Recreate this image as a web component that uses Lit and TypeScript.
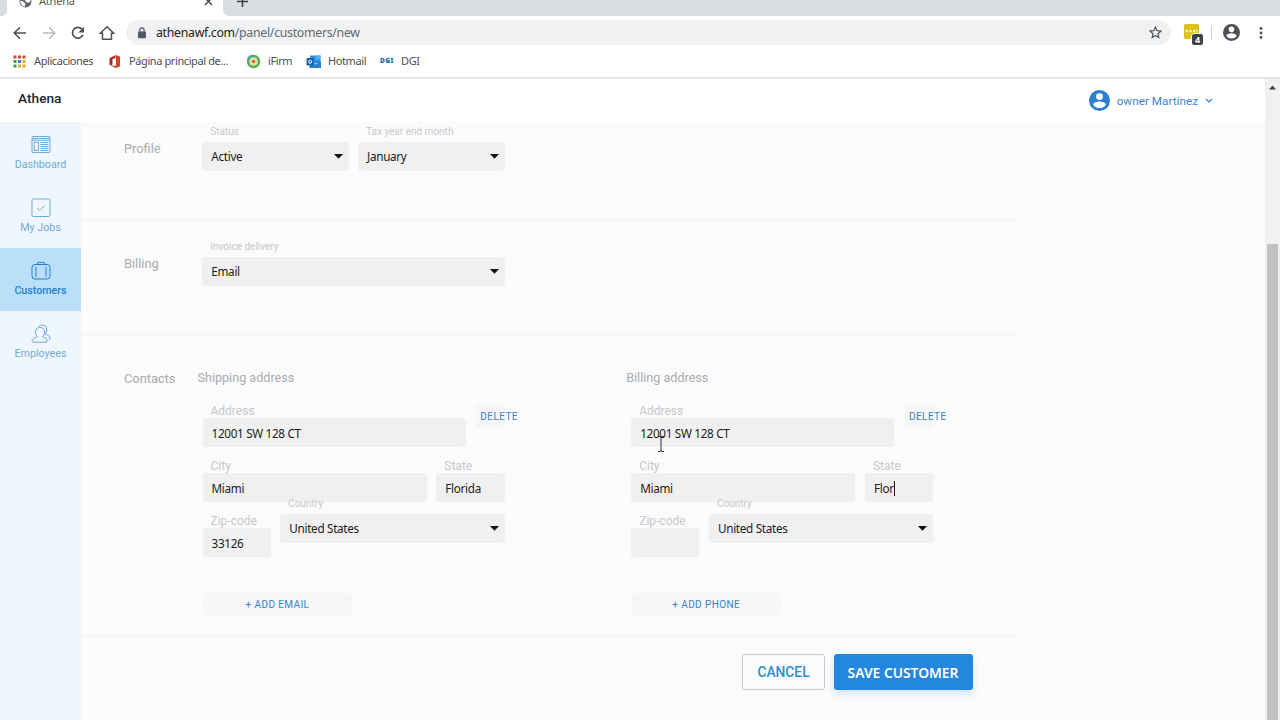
import { LitElement, html, css, svg } from "lit";
import { customElement, property } from "lit/decorators.js";

@customElement("form-field")
class FormField extends LitElement {
  @property() label = "";
  @property() value = "";
  @property({ type: Boolean }) select = false;
  @property({ type: Boolean }) caret = false;

  static styles = css`
    :host { display: block; min-width: 0; }
    .label { height: 13px; padding-left: 8px; font: 400 12px/13.800px Roboto, sans-serif; color: #c6c8cb; white-space: nowrap; }
    .small { font-size: 10px; line-height: 13px; margin-bottom: 4px; }
    .box { height: 29px; box-sizing: border-box; padding: 0 6px 0 9px; background: #f0f0f0; border-radius: 3px; display: flex; align-items: center; justify-content: space-between; font: 11.700px/29px "Noto Sans", sans-serif; letter-spacing: -.3px; color: #1b1b1b; }
    .value { display: flex; align-items: center; white-space: nowrap; }
    .plain .value { padding-top: 2px; }
    .caret { width: 1px; height: 15px; background: #222; }
    .arrow { width: 9px; height: 5px; }
  `;

  render() {
    return html`
      <div class="label ${this.select ? "small" : ""}">${this.label}</div>
      <div class="box ${this.select ? "" : "plain"}">
        <span class="value">${this.value}${this.caret ? html`<i class="caret"></i>` : ""}</span>
        ${this.select ? html`<svg class="arrow" viewBox="0 0 9 5"><path d="M0 0h9L4.5 4.8z" fill="#111"/></svg>` : ""}
      </div>`;
  }
}

const navIcons = {
  dashboard: svg`<rect x="1" y="1.500" width="18" height="16" rx="1"/><path d="M1 5.200h18M1 3.400h18"/><rect x="3.200" y="7.200" width="4.300" height="8.300"/><path d="M9.500 7.500h8M9.500 9.500h8M9.500 11.500h8M9.500 13.500h8M9.500 15.500h8"/>`,
  jobs: svg`<rect x="1" y="1" width="18" height="17.500" rx="1.300"/><path d="M6.200 10l2.600 2.500 5-5.200"/>`,
  customers: svg`<rect x="1" y="3.500" width="18" height="14.500" rx="3"/><path d="M6 3.300l.8-1.900h6.400l.8 1.900M5 5.700v10.400M15 5.700v10.400"/>`,
  employees: svg`<path d="M6.600 12.800C5.200 11.500 4.500 9.900 4.500 8 4.500 5.200 6.300 3.400 9 3.400s4.500 1.800 4.500 4.600c0 1.900-.7 3.500-2.100 4.800 3.100.7 4.700 1.700 4.700 4.100 0 .8-.4 1.300-1.100 1.300H2.100c-.7 0-1.100-.5-1.100-1.300 0-2.400 2.500-3.400 5.600-4.100z"/><path d="M7.900 2.300C8.800 1.400 9.900 1 11.200 1c2.700 0 4.500 1.900 4.500 4.700 0 1.800-.6 3.300-1.900 4.500 3.300.8 5.300 2 5.300 4.300 0 .9-.5 1.400-1.400 1.400"/>`,
};

@customElement("app-root")
class AppRoot extends LitElement {
  static styles = css`
    :host { display: block; width: 1280px; height: 720px; overflow: hidden; position: relative; font-family: Roboto, sans-serif; background: #fff; }
    svg { display: block; flex: none; }
    .tabs { height: 16px; background: #fff; display: flex; overflow: hidden; }
    .tab-prev { width: 7px; background: #dadde2; border-radius: 0 0 5px 0; }
    .tab { box-sizing: border-box; width: 216px; height: 16px; background: #fff; display: flex; align-items: flex-start; padding-left: 12px; }
    .tab-name { font: 11px/16px "Noto Sans", sans-serif; letter-spacing: -.2px; color: #555; margin: -7px 0 0 7px; width: 128px; }
    .tab svg { margin-top: -5px; }
    .tab .close { margin: -3px 0 0 37px; }
    .tab-rest { flex: 1; background: #dadde2; border-bottom-left-radius: 6px; padding-left: 13px; }
    .tab-rest svg { margin-top: -5px; }
    .toolbar { height: 33px; display: flex; align-items: center; padding-left: 12px; }
    .nav-buttons { display: flex; gap: 13px; width: 114px; }
    .omnibox { width: 1045px; height: 25px; box-sizing: border-box; border-radius: 13px; background: #eff1f3; display: flex; align-items: center; padding: 0 9px 0 11px; }
    .url { font: 12.300px/25px "Noto Sans", sans-serif; letter-spacing: -.28px; color: #65696e; margin-left: 9px; flex: 1; }
    .url b { font-weight: 400; color: #202124; }
    .extension { position: relative; width: 20px; height: 20px; margin-left: 12px; }
    .badge { position: absolute; left: 8px; top: 10px; width: 11px; height: 11px; border: 1px solid #fff; border-radius: 3px; background: #414141; color: #fff; font: bold 9px/11px "Noto Sans", sans-serif; text-align: center; }
    .rule { width: 1px; height: 15px; background: #cfd1d4; margin: 0 11px 0 8px; }
    .dots { margin-left: 19px; }
    .bookmarks { box-sizing: border-box; height: 30px; border-bottom: 2px solid #e4e5e7; display: flex; padding: 0 0 4px 12px; font: 11px/24px "Noto Sans", sans-serif; letter-spacing: -.4px; color: #4b4e52; }
    .bookmark { display: flex; align-items: center; gap: 7px; white-space: nowrap; }
    .bm-apps { width: 95px; } .bm-office { width: 139px; } .bm-ifirm { width: 60px; } .bm-mail { width: 74px; }
    .dgi-mark { font: 900 6.500px/8px "Noto Sans", sans-serif; letter-spacing: .4px; color: #17679f; width: 14px; }
    .page { display: flex; height: 641px; }
    .app { width: 1265px; display: flex; flex-direction: column; }
    .header { height: 43px; background: #fff; display: flex; justify-content: space-between; padding: 0 52px 0 18px; }
    .brand { font: 500 13.700px/39px Roboto, sans-serif; color: #20262e; }
    .owner { display: flex; align-items: center; font-size: 11.750px; color: #3a85ca; height: 43px; }
    .owner span { margin: 0 7px 0 7px; }
    .body { flex: 1; display: flex; background: #fbfbfb; }
    .sidebar { width: 81px; background: #f0f6fd; }
    .item { height: 63.100px; box-sizing: border-box; padding-top: 12.500px; display: flex; flex-direction: column; align-items: center; font-size: 10.700px; line-height: 14px; color: #6fabd8; gap: 3px; }
    .item.active { background: #bbdef9; color: #2480cf; font-weight: 500; }
    .item svg { fill: none; stroke: currentColor; stroke-width: 1; }
    .content { width: 935px; display: flex; flex-direction: column; }
    .section { display: flex; box-sizing: border-box; border-bottom: 1px solid #f3f3f3; }
    .name { box-sizing: border-box; padding-left: 43px; width: 121.300px; font-size: 12.800px; line-height: 20px; color: #a9acb0; }
    .profile { height: 99px; padding-top: 3px; }
    .profile .name { padding-top: 14px; }
    .billing .name { padding-top: 14.500px; }
    .profile .fields { display: grid; grid-template-columns: 146.300px 147px; gap: 9.500px; }
    .billing { height: 114px; padding-top: 18.500px; }
    .billing .fields { width: 302.700px; }
    .contacts { height: 301px; padding-top: 33px; }
    .contacts .name { width: 116.500px; padding-top: 1px; }
    .contact { width: 428.700px; flex: none; }
    .contact:last-child { width: 340px; }
    .title { font-size: 12.600px; line-height: 20px; color: #a9acb0; }
    .address { width: 302px; margin: 16.500px 0 36px 5px; display: flex; flex-direction: column; gap: 13.300px; }
    .row { display: grid; column-gap: 9.500px; height: 42px; }
    .row-street { grid-template-columns: 263px 29px; column-gap: 10.500px; }
    .row-city { grid-template-columns: 224.300px 68.500px; }
    .row-zip { grid-template-columns: 68.300px 224.300px; }
    .country { margin-top: -18px; }
    .delete { width: 29px; height: 23px; background: #f6f6f6; border-radius: 2px; padding-left: 4.300px; box-sizing: border-box; font-size: 10px; line-height: 23px; letter-spacing: .42px; color: #3c7fd0; white-space: nowrap; }
    .add { width: 149px; height: 23px; margin-left: 5.500px; background: #f6f6f6; border-radius: 2px; text-align: center; font-size: 10px; line-height: 23px; letter-spacing: .4px; color: #3c7fd0; }
    .actions { display: flex; justify-content: flex-end; gap: 9px; padding: 18px 43.500px 0 0; }
    .btn { box-sizing: border-box; height: 36.400px; border-radius: 3px; text-align: center; }
    .cancel { width: 83px; border: 1px solid #c8cacc; background: #fafbfd; color: #2b8fc6; font: 500 13.800px/35px Roboto, sans-serif; padding-left: 1px; }
    .save { width: 139px; background: #2487df; color: #fff; font: 600 13.800px/37px "Noto Sans", sans-serif; box-shadow: 0 4px 9px #bcd5fa99; }
    .scrollbar { width: 15px; background: #f1f1f1; display: flex; flex-direction: column; align-items: center; }
    .scrollbar svg { margin: 6px 0 154px; }
    .thumb { width: 11px; flex: 1; background: #c1c1c1; }
    .pointer { position: absolute; left: 657px; top: 435px; }
  `;

  private person(size: number, color: string) {
    return html`<svg width=${size} height=${size} viewBox="2 2 20 20"><path fill=${color} d="M12 2a10 10 0 1 0 0 20 10 10 0 0 0 0-20zm0 3a3.300 3.300 0 1 1 0 6.600A3.300 3.300 0 0 1 12 5zm0 14.200a7.200 7.200 0 0 1-6-3.200c0-2 4-3.100 6-3.100s6 1.100 6 3.100a7.200 7.200 0 0 1-6 3.200z"/></svg>`;
  }

  private item(icon: keyof typeof navIcons, text: string, active = false) {
    return html`<div class="item ${active ? "active" : ""}"><svg width="20" height="20" viewBox="0 0 20 20">${navIcons[icon]}</svg><span>${text}</span></div>`;
  }

  private contact(title: string, state: string, zip: string, add: string, caret: boolean) {
    return html`<div class="contact">
      <div class="title">${title}</div>
      <div class="address">
        <div class="row row-street"><form-field label="Address" value="12001 SW 128 CT"></form-field><div class="delete">DELETE</div></div>
        <div class="row row-city"><form-field label="City" value="Miami"></form-field><form-field label="State" .value=${state} .caret=${caret}></form-field></div>
        <div class="row row-zip"><form-field label="Zip-code" .value=${zip}></form-field><form-field class="country" select label="Country" value="United States"></form-field></div>
      </div>
      <div class="add">${add}</div>
    </div>`;
  }

  render() {
    const colors = ["#d44336", "#d44336", "#d44336", "#3b9b55", "#3b7fd4", "#e2ae20", "#3b9b55", "#e2ae20", "#e2ae20"];
    return html`
      <div class="tabs">
        <div class="tab-prev"></div>
        <div class="tab">
          <svg width="13" height="13" viewBox="0 0 13 13"><circle cx="6.500" cy="6.500" r="6" fill="#5f6368"/><path d="M1.500 5.500l3.500 1.500 1.500 2-.5 2.500C3 11.500 1 8.500 1.500 5.500zM7 3l4 1 .7 2.500-2.700 1.500-3-2z" fill="#fff"/></svg>
          <span class="tab-name">Athena</span>
          <svg class="close" width="9" height="9" viewBox="0 0 9 9"><path d="M1 1l7 7M8 1L1 8" stroke="#4c4f53" stroke-width="1.500"/></svg>
        </div>
        <div class="tab-rest"><svg width="13" height="13" viewBox="0 0 13 13"><path d="M6.500 1v11M1 6.500h11" stroke="#3c4043" stroke-width="1.600"/></svg></div>
      </div>
      <div class="toolbar">
        <div class="nav-buttons">
          <svg width="16" height="16" viewBox="0 0 16 16" fill="none" stroke="#4f5358" stroke-width="1.600"><path d="M14 8H2.500M8 2.200L2.200 8 8 13.800"/></svg>
          <svg width="16" height="16" viewBox="0 0 16 16" fill="none" stroke="#b9bbbe" stroke-width="1.500"><path d="M2 8h11.500M8 2.200L13.800 8 8 13.800"/></svg>
          <svg width="16" height="16" viewBox="0 0 16 16"><path d="M12 4.200A5.400 5.400 0 1 0 12.900 9.800" fill="none" stroke="#4f5358" stroke-width="1.700"/><path d="M14 1.800v5.700H8.300z" fill="#4f5358"/></svg>
          <svg width="16" height="16" viewBox="0 0 16 16"><path d="M1.300 8.200L8 1.800l6.700 6.400H12.500v6h-9v-6z" fill="none" stroke="#4f5358" stroke-width="1.500"/></svg>
        </div>
        <div class="omnibox">
          <svg width="10" height="12" viewBox="0 0 10 12"><rect x="1" y="4.500" width="8" height="6.700" rx="1" fill="#55595e"/><path d="M2.900 5V3a2.100 2.100 0 0 1 4.200 0v2" fill="none" stroke="#55595e" stroke-width="1.200"/></svg>
          <span class="url"><b>athenawf.com</b>/panel/customers/new</span>
          <svg width="13" height="13" viewBox="0 0 13 13"><path d="M6.500 1.200l1.600 3.500 3.800.4L9 7.700l.8 3.800-3.300-2-3.300 2L4 7.700 1.100 5.100l3.800-.4z" fill="none" stroke="#4f5358" stroke-width="1.200"/></svg>
        </div>
        <div class="extension">
          <svg width="16" height="16" viewBox="0 0 16 16"><rect x="1" y="1" width="15" height="15" rx="1.500" fill="#dfc121"/><g fill="#fff8cf"><circle cx="3.800" cy="8" r="1.200"/><circle cx="7.500" cy="8" r="1.200"/><circle cx="11.200" cy="8" r="1.200"/><path d="M13.300 6.500h1v3h-1z"/></g></svg>
          <span class="badge">4</span>
        </div>
        <div class="rule"></div>
        ${this.person(17, "#4f5156")}
        <svg class="dots" width="4" height="14" viewBox="0 0 4 14" fill="#4f5358"><circle cx="2" cy="2.500" r="1.400"/><circle cx="2" cy="7" r="1.400"/><circle cx="2" cy="11.500" r="1.400"/></svg>
      </div>
      <div class="bookmarks">
        <div class="bookmark bm-apps"><svg width="15" height="15" viewBox="0 0 15 15">${colors.map((c, i) => svg`<rect x=${1.5 + (i % 3) * 4.5} y=${1.5 + Math.floor(i / 3) * 4.5} width="3" height="3" fill=${c} />`)}</svg>Aplicaciones</div>
        <div class="bookmark bm-office"><svg width="15" height="15" viewBox="0 0 15 15"><path d="M2.500 4.200L8.500 1v3L5.500 5v5.500L3.500 11.500 2.500 10.800z" fill="#a52a2a"/><path d="M8.500 1L13 2.400v10.200L8.500 14 3.500 11.500l5.500.3V3.800z" fill="#d8401f"/></svg>Página principal de...</div>
        <div class="bookmark bm-ifirm"><svg width="15" height="15" viewBox="0 0 15 15"><circle cx="7.500" cy="7.500" r="5.500" fill="#dfe8b0" stroke="#5dae55" stroke-width="2.500"/><path d="M2 5a6 6 0 0 1 5-3.500" stroke="#4aa6b6" stroke-width="2" fill="none"/><circle cx="7.500" cy="7.500" r="1.800" fill="#d26444"/></svg>iFirm</div>
        <div class="bookmark bm-mail"><svg width="15" height="15" viewBox="0 0 15 15"><path d="M4 1.500h10.500v8H4z" fill="#2a8ddb"/><path d="M9.500 1.500h5v4h-5z" fill="#48b4ee"/><path d="M3.500 7.500l5.800 3 5.700-3V14H3.500z" fill="#237fd0"/><rect x=".5" y="4" width="7.500" height="7.500" rx=".8" fill="#1664ae"/><circle cx="4.200" cy="7.800" r="1.500" fill="none" stroke="#fff"/></svg>Hotmail</div>
        <div class="bookmark"><span class="dgi-mark">DGI</span>DGI</div>
      </div>
      <div class="page">
        <div class="app">
          <div class="header">
            <div class="brand">Athena</div>
            <div class="owner">${this.person(21, "#2f80d0")}<span>owner Martinez</span><svg width="8" height="6" viewBox="0 0 8 6"><path d="M1 1l3 3 3-3" fill="none" stroke="#3a85ca" stroke-width="1.200"/></svg></div>
          </div>
          <div class="body">
            <div class="sidebar">
              ${this.item("dashboard", "Dashboard")}${this.item("jobs", "My Jobs")}${this.item("customers", "Customers", true)}${this.item("employees", "Employees")}
            </div>
            <div class="content">
              <div class="section profile"><div class="name">Profile</div><div class="fields">
                <form-field select label="Status" value="Active"></form-field>
                <form-field select label="Tax year end month" value="January"></form-field>
              </div></div>
              <div class="section billing"><div class="name">Billing</div><div class="fields"><form-field select label="Invoice delivery" value="Email"></form-field></div></div>
              <div class="section contacts"><div class="name">Contacts</div>
                ${this.contact("Shipping address", "Florida", "33126", "+ ADD EMAIL", false)}
                ${this.contact("Billing address", "Flor", "", "+ ADD PHONE", true)}
              </div>
              <div class="actions"><div class="btn cancel">CANCEL</div><div class="btn save">SAVE CUSTOMER</div></div>
            </div>
          </div>
        </div>
        <div class="scrollbar"><svg width="7" height="5" viewBox="0 0 7 5"><path d="M0 4.500h7L3.500.5z" fill="#404040"/></svg><div class="thumb"></div></div>
      </div>
      <svg class="pointer" width="8" height="18" viewBox="0 0 8 18"><path d="M1 1.500h2l1 .8 1-.8h2M4 2v14M1 16.500h2l1-.8 1 .8h2" fill="none" stroke="#333"/></svg>
    `;
  }
}
